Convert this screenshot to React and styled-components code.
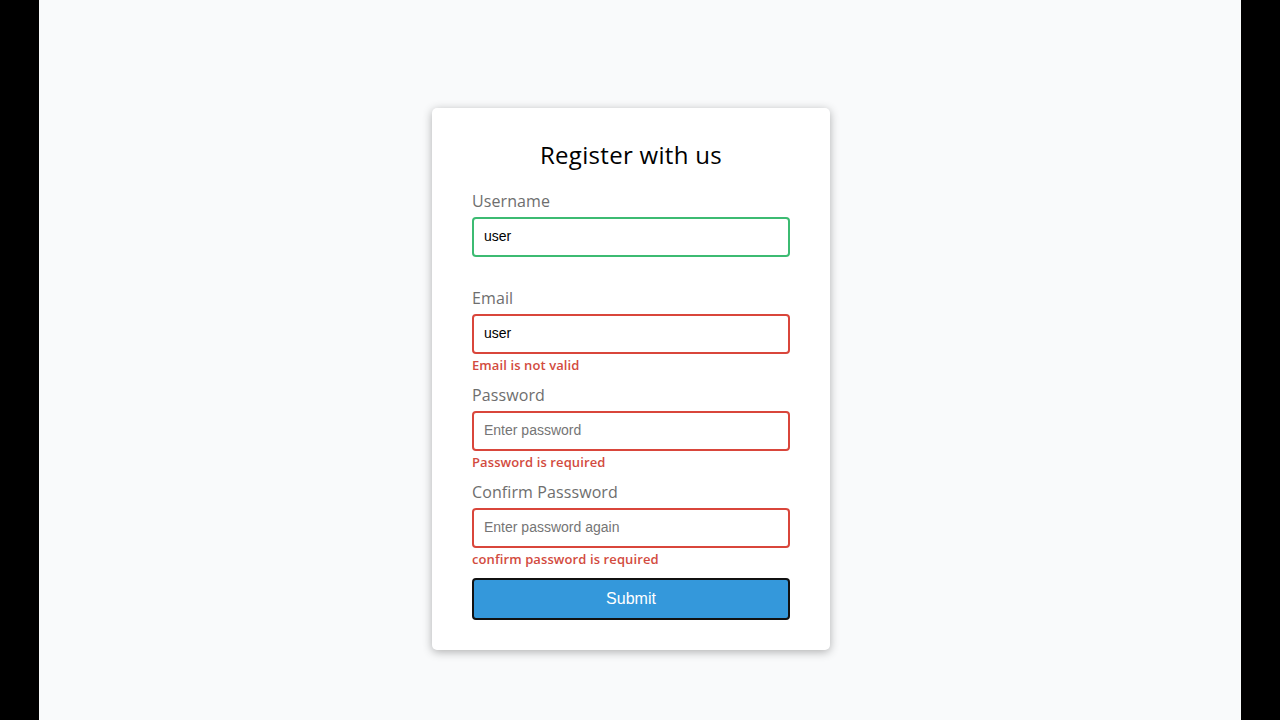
import React from 'react'
import styled, { createGlobalStyle } from 'styled-components'

const GlobalStyle = createGlobalStyle`
  * {
    box-sizing: border-box;
  }
  body {
    margin: 0;
    background-color: #000;
    font-family: 'Open Sans', 'Liberation Sans', sans-serif;
  }
`

const Screen = styled.div`
  height: 720px;
  padding: 0 39px;
  display: flex;
`

const Page = styled.div`
  flex: 1;
  background-color: #f9fafb;
  display: flex;
  justify-content: center;
  align-items: flex-start;
  padding-top: 108px;
  padding-right: 18px;
`

const Card = styled.div`
  width: 398px;
  background-color: #fff;
  border-radius: 5px;
  box-shadow: 0 2px 10px rgba(0, 0, 0, 0.3);
  padding: 30px 40px;
`

const Title = styled.h2`
  margin: 0 0 19px;
  text-align: center;
  font-size: 24px;
  font-weight: 500;
  color: #000;
  line-height: 33px;
  letter-spacing: 0.3px;
`

const Control = styled.div`
  margin-bottom: 10px;
`

const Label = styled.label`
  display: block;
  color: #6e6e6e;
  font-size: 16px;
  font-weight: 500;
  line-height: 22px;
  margin-bottom: 5px;
  letter-spacing: 0.1px;
`

const borderColors = {
  error: '#d9463b',
  success: '#3cbb72',
  idle: '#f0f0f0',
}

const Input = styled.input`
  display: block;
  width: 100%;
  height: 40px;
  padding: 9px 10px 11px;
  border: 2px solid ${p => borderColors[p.$state] || borderColors.idle};
  border-radius: 4px;
  font-family: Arial, 'Liberation Sans', sans-serif;
  font-size: 14px;
  color: #000;
  outline: none;

  &::placeholder {
    color: #757575;
  }
`

const Message = styled.small`
  display: block;
  height: 20px;
  padding-top: 3px;
  line-height: 17px;
  font-size: 13px;
  font-weight: 600;
  letter-spacing: 0.1px;
  color: #d24b40;
`

const Button = styled.button`
  display: block;
  width: 100%;
  height: 42px;
  margin-top: 0;
  background-color: #3498db;
  border: 2px solid #111;
  border-radius: 4px;
  color: #fff;
  font-family: Arial, 'Liberation Sans', sans-serif;
  font-size: 16px;
  cursor: pointer;
`

const fields = [
  { id: 'username', label: 'Username', value: 'user', placeholder: 'Enter username', state: 'success' },
  { id: 'email', label: 'Email', value: 'user', placeholder: 'Enter email', state: 'error', message: 'Email is not valid' },
  { id: 'password', label: 'Password', value: '', placeholder: 'Enter password', state: 'error', message: 'Password is required', type: 'password' },
  { id: 'password2', label: 'Confirm Passsword', value: '', placeholder: 'Enter password again', state: 'error', message: 'confirm password is required', type: 'password' },
]

export default function App() {
  return (
    <>
      <GlobalStyle />
      <Screen>
        <Page>
          <Card>
            <Title>Register with us</Title>
            <form onSubmit={e => e.preventDefault()}>
              {fields.map(f => (
                <Control key={f.id}>
                  <Label htmlFor={f.id}>{f.label}</Label>
                  <Input
                    id={f.id}
                    type={f.type || 'text'}
                    placeholder={f.placeholder}
                    defaultValue={f.value}
                    $state={f.state}
                  />
                  <Message>{f.message || ''}</Message>
                </Control>
              ))}
              <Button type="submit">Submit</Button>
            </form>
          </Card>
        </Page>
      </Screen>
    </>
  )
}
